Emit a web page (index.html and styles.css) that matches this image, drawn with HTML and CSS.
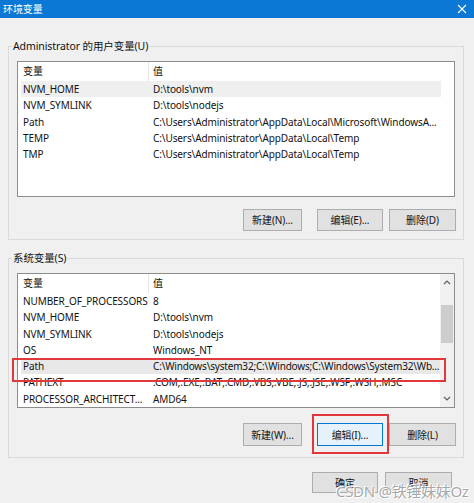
FILE: index.html
```html
<!DOCTYPE html>
<html lang="zh-CN">
<head>
<meta charset="utf-8">
<title>环境变量</title>
<link rel="stylesheet" href="styles.css">
</head>
<body>
<div class="window">
  <div class="titlebar">
    <span class="title">环境变量</span>
    <svg class="close" width="10" height="10" viewBox="0 0 10 10"><path d="M1 1L9 9M9 1L1 9" stroke="#fff" stroke-width="1.1"/></svg>
  </div>
  <div class="body">
    <fieldset class="group group-user">
      <legend>Administrator 的用户变量(U)</legend>
      <div class="list list-user">
        <div class="rows">
          <div class="row head"><span class="c1">变量</span><span class="c2">值</span></div>
          <div class="row hover"><span class="c1">NVM_HOME</span><span class="c2">D:\tools\nvm</span></div>
          <div class="row"><span class="c1">NVM_SYMLINK</span><span class="c2">D:\tools\nodejs</span></div>
          <div class="row"><span class="c1">Path</span><span class="c2">C:\Users\Administrator\AppData\Local\Microsoft\WindowsA...</span></div>
          <div class="row"><span class="c1">TEMP</span><span class="c2">C:\Users\Administrator\AppData\Local\Temp</span></div>
          <div class="row"><span class="c1">TMP</span><span class="c2">C:\Users\Administrator\AppData\Local\Temp</span></div>
        </div>
      </div>
      <div class="btnrow">
        <button class="btn b1">新建(N)...</button>
        <button class="btn b2">编辑(E)...</button>
        <button class="btn b3">删除(D)</button>
      </div>
    </fieldset>

    <fieldset class="group group-sys">
      <legend>系统变量(S)</legend>
      <div class="list list-sys">
        <div class="rows">
          <div class="row head"><span class="c1">变量</span><span class="c2">值</span></div>
          <div class="row"><span class="c1">NUMBER_OF_PROCESSORS</span><span class="c2">8</span></div>
          <div class="row"><span class="c1">NVM_HOME</span><span class="c2">D:\tools\nvm</span></div>
          <div class="row"><span class="c1">NVM_SYMLINK</span><span class="c2">D:\tools\nodejs</span></div>
          <div class="row"><span class="c1">OS</span><span class="c2">Windows_NT</span></div>
          <div class="row selected"><span class="c1">Path</span><span class="c2 tight">C:\Windows\system32;C:\Windows;C:\Windows\System32\Wb...</span></div>
          <div class="row"><span class="c1">PATHEXT</span><span class="c2">.COM;.EXE;.BAT;.CMD;.VBS;.VBE;.JS;.JSE;.WSF;.WSH;.MSC</span></div>
          <div class="row"><span class="c1">PROCESSOR_ARCHITECT...</span><span class="c2">AMD64</span></div>
        </div>
        <div class="scrollbar">
          <div class="arrow"><svg width="8" height="5" viewBox="0 0 8 5"><path d="M1 4L4 1L7 4" fill="none" stroke="#606060" stroke-width="1.2"/></svg></div>
          <div class="track"><div class="thumb"></div></div>
          <div class="arrow"><svg width="8" height="5" viewBox="0 0 8 5"><path d="M1 1L4 4L7 1" fill="none" stroke="#606060" stroke-width="1.2"/></svg></div>
        </div>
      </div>
      <div class="btnrow btnrow-sys">
        <button class="btn b1">新建(W)...</button>
        <button class="btn b2 focused">编辑(I)...</button>
        <button class="btn b3">删除(L)</button>
      </div>
    </fieldset>

    <div class="footer">
      <button class="btn ok">确定</button>
      <button class="btn cancel">取消</button>
    </div>
  </div>

  <div class="mark mark-path"></div>
  <div class="mark mark-edit"></div>
  <div class="watermark">CSDN @铁锤妹妹Oz</div>
</div>
</body>
</html>
```

FILE: styles.css
```css
* { box-sizing: border-box; }

html, body {
  margin: 0;
  padding: 0;
  background: #f0f0f0;
}

body {
  font-family: "Noto Sans", "Noto Sans CJK SC", sans-serif;
  font-size: 10px;
  letter-spacing: -0.1px;
  color: #111;
}

.window {
  position: relative;
  width: 474px;
  height: 503px;
  overflow: hidden;
  background: #f0f0f0;
}

.titlebar {
  height: 18px;
  background: #0a78d4;
  display: flex;
  align-items: center;
  justify-content: space-between;
  padding: 0 7px 0 3px;
}

.title {
  color: #fff;
  font-size: 10px;
  line-height: 18px;
}

.close { display: block; }

.body {
  padding-top: 21px;
}

.group {
  margin: 0 10px 0 8px;
  padding: 8px 8px 8px 8px;
  border: 1px solid #dadada;
  min-width: 0;
}

.group legend {
  margin-left: -5px;
  padding: 0 1px;
  line-height: 14px;
  height: 14px;
  font-size: 10.5px;
}

.group-sys {
  margin-top: 11px;
  padding-bottom: 11px;
}

.list {
  border: 1px solid #8c8c8c;
  background: #fff;
  display: flex;
  overflow: hidden;
}

.list-user { height: 136px; }
.list-sys { height: 135px; }

.rows {
  flex: 1;
  min-width: 0;
  padding-left: 3px;
  padding-right: 13px;
}

.row {
  display: flex;
  height: 16.3px;
  line-height: 16px;
  white-space: nowrap;
  overflow: hidden;
}

.row.head {
  height: 19px;
  line-height: 19px;
}

.c1 {
  width: 127px;
  flex: none;
  padding-left: 2px;
  overflow: hidden;
}

.c2 {
  flex: 1;
  padding-left: 5px;
  overflow: hidden;
}

.c2.tight { letter-spacing: -0.18px; }

.head .c2 {
  border-left: 1px solid #e5e5e5;
  padding-left: 4px;
}

.row.hover { background: #efefef; }
.row.selected { background: #e8e8e8; }

.list-sys .rows { padding-right: 0; }

.scrollbar {
  width: 14px;
  flex: none;
  display: flex;
  flex-direction: column;
  background: #f0f0f0;
}

.arrow {
  height: 17px;
  display: flex;
  align-items: center;
  justify-content: center;
}

.track { flex: 1; }

.thumb {
  margin: 14px 1px 0 1px;
  height: 38px;
  background: #cdcdcd;
}

.btnrow {
  display: flex;
  justify-content: flex-end;
  margin-top: 12px;
  margin-right: -1px;
}

.btnrow-sys { margin-top: 15px; }

.btn {
  font-family: "Noto Sans", "Noto Sans CJK SC", sans-serif;
  font-size: 10px;
  letter-spacing: -0.1px;
  color: #111;
  height: 22px;
  padding: 0;
  background: #e1e1e1;
  border: 1px solid #adadad;
  border-radius: 0;
  line-height: 20px;
}

.btnrow-sys .btn { height: 23px; }

.b1 { width: 59px; }
.b2 { width: 66px; margin-left: 15px; }
.b3 { width: 67px; margin-left: 6px; }

.btn.focused {
  border: 1px solid #0078d7;
  background: #e5f1fb;
  box-shadow: inset 0 0 0 1px #e5f1fb;
}

.footer {
  display: flex;
  justify-content: flex-end;
  margin-top: 14px;
  padding-right: 22px;
}

.ok { width: 66px; height: 21px; }
.cancel { width: 67px; height: 21px; margin-left: 7px; }

.mark {
  position: absolute;
  border: 2px solid #e0383b;
}

.mark-path {
  left: 12px;
  top: 358px;
  width: 434px;
  height: 24px;
}

.mark-edit {
  left: 312px;
  top: 414px;
  width: 77px;
  height: 40px;
}

.watermark {
  position: absolute;
  left: 336px;
  top: 482px;
  font-size: 15px;
  color: rgba(90, 90, 90, 0.55);
  font-family: "Noto Sans", "Noto Sans CJK SC", sans-serif;
  white-space: nowrap;
  text-shadow: 0 0 1px #fff, 1px 1px 0 #fff, -1px -1px 0 #fff;
  letter-spacing: -0.3px;
  line-height: 18px;
}
```
